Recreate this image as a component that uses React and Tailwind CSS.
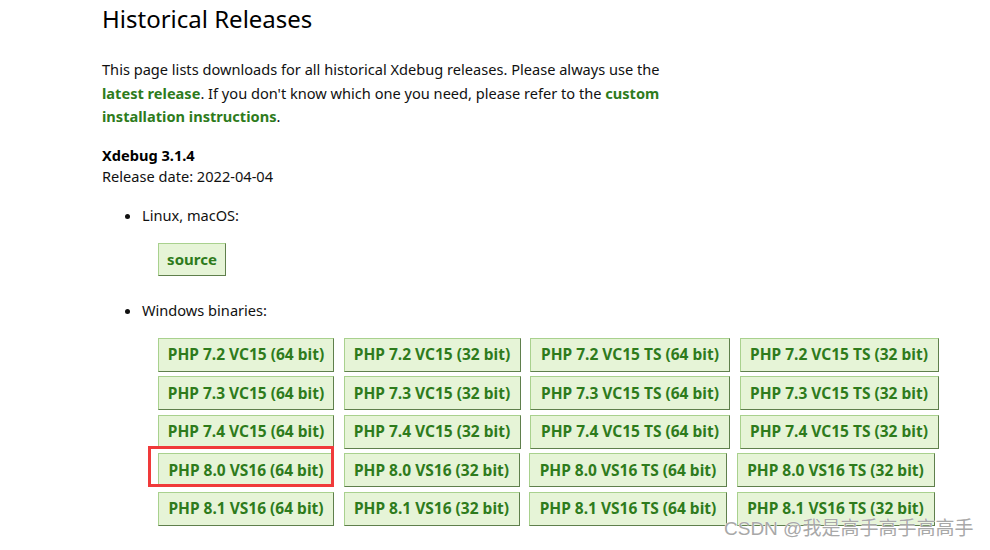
const rowsA = [
  ["PHP 7.2 VC15 (64 bit)", "PHP 7.2 VC15 (32 bit)", "PHP 7.2 VC15 TS (64 bit)", "PHP 7.2 VC15 TS (32 bit)"],
  ["PHP 7.3 VC15 (64 bit)", "PHP 7.3 VC15 (32 bit)", "PHP 7.3 VC15 TS (64 bit)", "PHP 7.3 VC15 TS (32 bit)"],
  ["PHP 7.4 VC15 (64 bit)", "PHP 7.4 VC15 (32 bit)", "PHP 7.4 VC15 TS (64 bit)", "PHP 7.4 VC15 TS (32 bit)"],
];
const rowsB = [
  ["PHP 8.0 VS16 (64 bit)", "PHP 8.0 VS16 (32 bit)", "PHP 8.0 VS16 TS (64 bit)", "PHP 8.0 VS16 TS (32 bit)"],
  ["PHP 8.1 VS16 (64 bit)", "PHP 8.1 VS16 (32 bit)", "PHP 8.1 VS16 TS (64 bit)", "PHP 8.1 VS16 TS (32 bit)"],
];
const widthsA = ["w-[176px]", "w-[177px]", "w-[200px]", "w-[199px]"];
const widthsB = ["w-[176px]", "w-[176px]", "w-[198px]", "w-[198px]"];

function DlButton({ label, width, marked }) {
  return (
    <a
      href="#"
      className={`relative flex h-[34px] ${width} items-center justify-center whitespace-nowrap border border-t-[#a9d18e] border-l-[#a9d18e] border-r-[#5f7f4c] border-b-[#5f7f4c] bg-[#e6f4d7] text-[15.5px] font-bold text-[#2e7b1c]`}
    >
      {label}
      {marked ? (
        <span className="pointer-events-none absolute left-[-11px] top-[-8px] h-[41px] w-[186px] border-[3px] border-[#f03a3a]" />
      ) : null}
    </a>
  );
}

export default function App() {
  return (
    <div
      className="relative h-[550px] w-[990px] overflow-hidden bg-white text-[#111]"
      style={{ fontFamily: '"Noto Sans", "Open Sans", sans-serif' }}
    >
      <div className="pl-[102px] pt-[2px]">
        <h1 className="text-[24px] leading-[34px] text-black">Historical Releases</h1>

        <p className="mt-[22px] w-[590px] text-[14.6px] leading-[23.5px]">
          This page lists downloads for all historical Xdebug releases. Please always use the{" "}
          <a href="#" className="font-bold text-[#2e7b1c]">latest release</a>. If you don't know which one you need,
          please refer to the{" "}
          <a href="#" className="font-bold text-[#2e7b1c]">custom installation instructions</a>.
        </p>

        <p className="mt-[16px] text-[14.6px] leading-[21px]">
          <strong className="font-bold text-black">Xdebug 3.1.4</strong>
          <br />
          Release date: 2022-04-04
        </p>

        <ul className="mt-[18px] list-disc pl-[40px] text-[14.6px] leading-[21px]">
          <li>
            Linux, macOS:
            <div className="ml-[16px] mt-[17px] mb-[24px] flex">
              <a
                href="#"
                className="flex h-[33px] w-[68px] items-center justify-center border border-t-[#a9d18e] border-l-[#a9d18e] border-r-[#5f7f4c] border-b-[#5f7f4c] bg-[#e6f4d7] text-[15px] font-bold text-[#2e7b1c]"
              >
                source
              </a>
            </div>
          </li>
          <li>
            Windows binaries:
            <div className="ml-[16px] mt-[17px] flex flex-col gap-[4.5px]">
              {rowsA.map((row, r) => (
                <div key={r} className="flex gap-[9.5px]">
                  {row.map((label, i) => (
                    <DlButton key={label} label={label} width={widthsA[i]} />
                  ))}
                </div>
              ))}
              {rowsB.map((row, r) => (
                <div key={r} className="flex gap-[9.5px]">
                  {row.map((label, i) => (
                    <DlButton key={label} label={label} width={widthsB[i]} marked={r === 0 && i === 0} />
                  ))}
                </div>
              ))}
            </div>
          </li>
        </ul>
      </div>

      <div
        className="absolute left-[724px] top-[517px] text-[19px] leading-[24px] text-[#a8a8a8]"
        style={{
          fontFamily: '"Liberation Sans", "Noto Sans CJK SC", sans-serif',
          textShadow: "0 0 1px #fff, 0 0 1px #fff",
        }}
      >
        CSDN @我是高手高手高高手
      </div>
    </div>
  );
}
